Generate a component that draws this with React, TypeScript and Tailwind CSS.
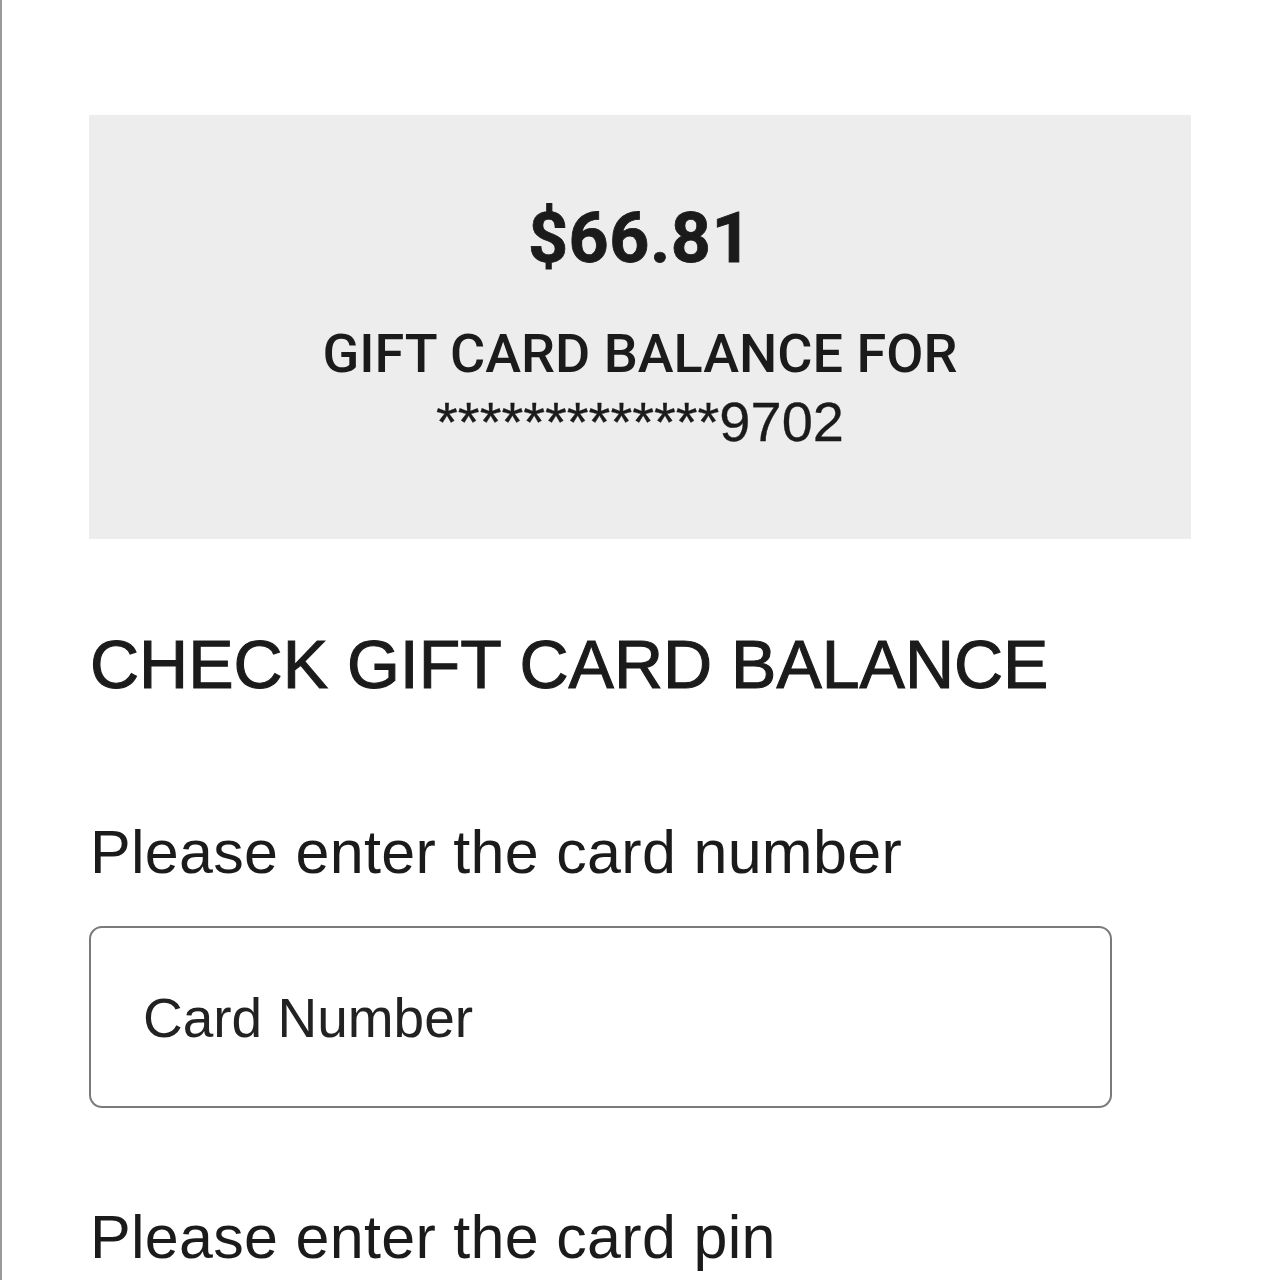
export default function App() {
  return (
    <div className="min-h-[1280px] w-[1280px] overflow-hidden border-l-2 border-[#9a9a9a] bg-white pl-[87px] pr-[89px] pt-[115px] font-['Liberation_Sans',Arial,sans-serif] text-[#1b1b1b]">
      {/* balance result */}
      <section className="bg-[#ededed] pb-[83px] pt-[88px] text-center">
        <p className="font-['Roboto',sans-serif] text-[70px] font-bold leading-[70px] tracking-[0.5px] [-webkit-text-stroke:0.8px_#1b1b1b]">
          $66.81
        </p>
        <p className="mt-[47px] font-['Roboto',sans-serif] text-[54px] font-medium leading-[68px]">
          GIFT CARD BALANCE FOR
        </p>
        <p className="text-[56px] leading-[68px] [-webkit-text-stroke:0.3px_#1b1b1b]">
          *************9702
        </p>
      </section>

      <h2 className="mt-[91px] pl-[1px] text-[68px] leading-[68px] [-webkit-text-stroke:1.1px_#1b1b1b]">
        CHECK GIFT CARD BALANCE
      </h2>

      <label className="mt-[124px] block pl-[1px] text-[61px] leading-[61px] tracking-[0.3px]">
        Please enter the card number
      </label>
      <div className="mt-[43px] flex h-[182px] w-[1023px] items-center rounded-[13px] border-2 border-[#7a7a7a] pl-[52px]">
        <span className="pt-[2px] text-[55px] leading-[55px] text-[#222]">
          Card Number
        </span>
      </div>

      <label className="mt-[99px] block pl-[1px] text-[61px] leading-[61px] tracking-[0.3px]">
        Please enter the card pin
      </label>
    </div>
  );
}
